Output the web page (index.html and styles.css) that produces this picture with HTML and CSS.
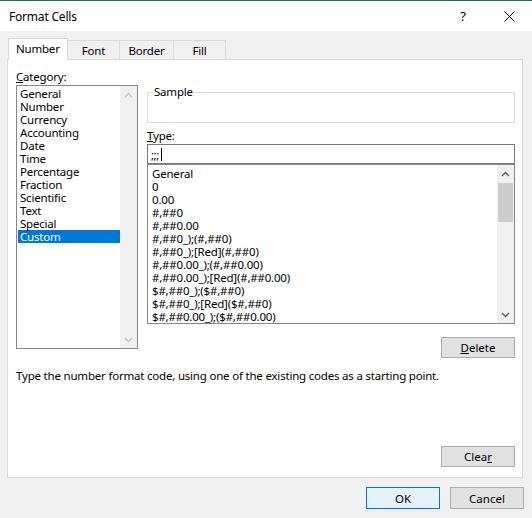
FILE: index.html
```html
<!DOCTYPE html>
<html lang="en">
<head>
<meta charset="utf-8">
<title>Format Cells</title>
<link rel="stylesheet" href="styles.css">
</head>
<body>
<div class="dialog">
  <header class="titlebar">
    <span class="title">Format Cells</span>
    <div class="caption-btns">
      <span class="cap-btn help">?</span>
      <span class="cap-btn close">
        <svg width="11" height="11" viewBox="0 0 11 11"><path d="M0.5 0.5 L10.5 10.5 M10.5 0.5 L0.5 10.5" stroke="#000" stroke-width="1" fill="none"/></svg>
      </span>
    </div>
  </header>

  <nav class="tabs">
    <div class="tab active">Number</div>
    <div class="tab w-font">Font</div>
    <div class="tab w-border">Border</div>
    <div class="tab w-fill">Fill</div>
  </nav>

  <section class="panel">
    <div class="cols">
      <div class="col-left">
        <div class="lbl"><u>C</u>ategory:</div>
        <div class="listbox cat">
          <ul class="items">
            <li>General</li>
            <li>Number</li>
            <li>Currency</li>
            <li>Accounting</li>
            <li>Date</li>
            <li>Time</li>
            <li>Percentage</li>
            <li>Fraction</li>
            <li>Scientific</li>
            <li>Text</li>
            <li>Special</li>
            <li class="sel">Custom</li>
          </ul>
          <div class="vscroll disabled">
            <span class="arrow"><svg width="9" height="6" viewBox="0 0 9 6"><path d="M1 5 L4.5 1.5 L8 5" stroke="#c2c2c2" stroke-width="1.4" fill="none"/></svg></span>
            <span class="arrow"><svg width="9" height="6" viewBox="0 0 9 6"><path d="M1 1 L4.5 4.5 L8 1" stroke="#c2c2c2" stroke-width="1.4" fill="none"/></svg></span>
          </div>
        </div>
      </div>

      <div class="col-right">
        <div class="sample"><span class="legend">Sample</span></div>
        <div class="lbl type-lbl"><u>T</u>ype:</div>
        <div class="input">;;;<span class="caret"></span></div>
        <div class="listbox type">
          <ul class="items">
            <li>General</li>
            <li>0</li>
            <li>0.00</li>
            <li>#,##0</li>
            <li>#,##0.00</li>
            <li>#,##0_);(#,##0)</li>
            <li>#,##0_);[Red](#,##0)</li>
            <li>#,##0.00_);(#,##0.00)</li>
            <li>#,##0.00_);[Red](#,##0.00)</li>
            <li>$#,##0_);($#,##0)</li>
            <li>$#,##0_);[Red]($#,##0)</li>
            <li>$#,##0.00_);($#,##0.00)</li>
          </ul>
          <div class="vscroll">
            <span class="arrow"><svg width="9" height="6" viewBox="0 0 9 6"><path d="M1 5 L4.5 1.5 L8 5" stroke="#606060" stroke-width="1.4" fill="none"/></svg></span>
            <span class="thumb"></span>
            <span class="track-fill"></span>
            <span class="arrow"><svg width="9" height="6" viewBox="0 0 9 6"><path d="M1 1 L4.5 4.5 L8 1" stroke="#606060" stroke-width="1.4" fill="none"/></svg></span>
          </div>
        </div>
        <div class="btn-row"><button class="btn"><u>D</u>elete</button></div>
      </div>
    </div>

    <p class="desc">Type the number format code, using one of the existing codes as a starting point.</p>

    <div class="btn-row bottom"><button class="btn">Clea<u>r</u></button></div>
  </section>

  <footer class="footer">
    <button class="btn default">OK</button>
    <button class="btn">Cancel</button>
  </footer>
</div>
</body>
</html>
```

FILE: styles.css
```css
* { box-sizing: border-box; }

body {
  margin: 0;
  background: #f0f0f0;
  font-family: "Noto Sans", "Open Sans", sans-serif;
  font-size: 11.5px;
  letter-spacing: -0.2px;
  color: #000;
}

.dialog {
  width: 532px;
  height: 518px;
  overflow: hidden;
}

/* Title bar */
.titlebar {
  height: 31px;
  border-top: 1px solid #217346;
  background: #fff;
  display: flex;
  align-items: center;
}
.title {
  padding-left: 9px;
  font-size: 12px;
}
.caption-btns {
  margin-left: auto;
  display: flex;
  height: 100%;
}
.cap-btn {
  width: 46px;
  display: flex;
  align-items: center;
  justify-content: center;
}
.help { font-size: 13px; }

/* Tabs */
.tabs {
  display: flex;
  align-items: flex-end;
  height: 21px;
  margin-top: 7px;
  padding-left: 8px;
}
.tab {
  height: 19px;
  border: 1px solid #d9d9d9;
  border-left: none;
  border-bottom: none;
  background: #f0f0f0;
  display: flex;
  align-items: center;
  justify-content: center;
}
.tab.active {
  width: 60px;
  height: 22px;
  border-left: 1px solid #d9d9d9;
  background: #fff;
  margin-bottom: -1px;
  position: relative;
  z-index: 1;
  justify-content: flex-start;
  padding-left: 7px;
  padding-bottom: 2px;
}
.w-font { width: 52px; }
.w-border { width: 54px; }
.w-fill { width: 52px; }

/* Panel */
.panel {
  margin-left: 7px;
  width: 516px;
  height: 419px;
  border: 1px solid #d9d9d9;
  background: #fff;
  padding: 0 7px 10px 8px;
  display: flex;
  flex-direction: column;
}
.cols {
  display: flex;
  gap: 9px;
}
.col-left {
  width: 122px;
  padding-top: 8px;
}
.col-right {
  width: 368px;
  padding-top: 32px;
}
.lbl {
  height: 17px;
  line-height: 17px;
}

.listbox {
  border: 1px solid #828790;
  background: #fff;
  display: flex;
  overflow: hidden;
}
.listbox.cat { height: 264px; }
.listbox.type { height: 160px; }

.items {
  flex: 1;
  list-style: none;
  margin: 0;
  padding: 1px 0 0 1px;
  overflow: hidden;
}
.listbox.type .items { padding-top: 2px; }
.items li {
  height: 13px;
  line-height: 13px;
  padding-left: 2px;
  white-space: nowrap;
}
.listbox.type .items li { padding-left: 3px; }
.items li.sel {
  background: #0078d7;
  color: #fff;
}

.vscroll {
  width: 17px;
  background: #f0f0f0;
  display: flex;
  flex-direction: column;
  align-items: center;
  justify-content: space-between;
}
.arrow {
  width: 17px;
  height: 17px;
  display: flex;
  align-items: center;
  justify-content: center;
}
.thumb {
  width: 15px;
  height: 39px;
  margin-top: 1px;
  background: #cdcdcd;
}
.track-fill { flex: 1; }

.sample {
  height: 31px;
  border: 1px solid #dcdcdc;
  position: relative;
}
.legend {
  position: absolute;
  left: 5px;
  top: -9px;
  padding: 0 1px;
  line-height: 16px;
  background: #fff;
}
.type-lbl { margin-top: 4px; }

.input {
  height: 20px;
  border: 1px solid #7a7a7a;
  padding-left: 3px;
  display: flex;
  align-items: center;
  letter-spacing: -0.5px;
}
.caret {
  display: inline-block;
  width: 1px;
  height: 13px;
  background: #000;
  margin-left: 2px;
}

.btn-row {
  display: flex;
  justify-content: flex-end;
  margin-top: 13px;
}
.btn-row.bottom { margin-top: auto; }

.btn {
  font: inherit;
  color: #000;
  width: 74px;
  height: 21px;
  padding: 0;
  border: 1px solid #adadad;
  background: #e1e1e1;
}

.desc {
  margin: 10px 0 0;
  line-height: 16px;
}

.footer {
  display: flex;
  justify-content: flex-end;
  gap: 10px;
  padding-right: 8px;
  margin-top: 9px;
}
.footer .btn { height: 22px; }
.btn.default {
  border-color: #0078d7;
  background: #e5f1fb;
}
```
